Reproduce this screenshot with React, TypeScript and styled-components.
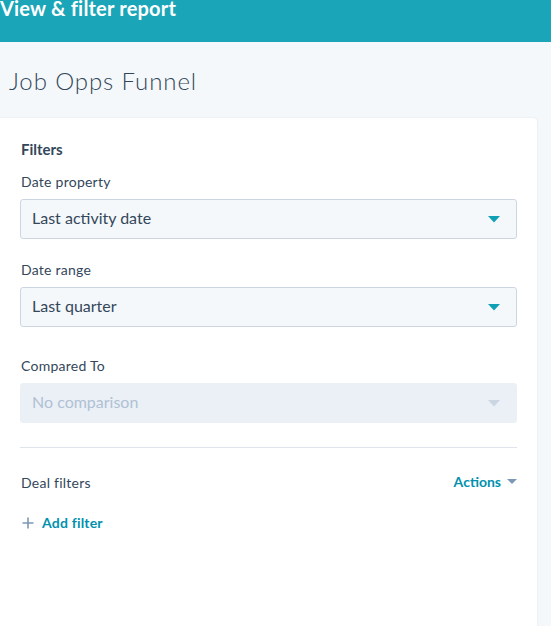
import styled, { createGlobalStyle } from 'styled-components';

const GlobalStyle = createGlobalStyle`
  html, body {
    margin: 0;
    padding: 0;
    background: #f5f8fa;
    font-family: Lato, "Open Sans", sans-serif;
    color: #33475b;
    overflow: hidden;
  }
`;

/** 日付系フィルタの定義 */
type SelectField = {
  label: string;
  value: string;
  disabled?: boolean;
  gap: number;
};

const fields: SelectField[] = [
  { label: 'Date property', value: 'Last activity date', gap: 13 },
  { label: 'Date range', value: 'Last quarter', gap: 21 },
  { label: 'Compared To', value: 'No comparison', disabled: true, gap: 29 },
];

/** ドロップダウンの三角 */
const Caret = ({ color }: { color: string }) => (
  <svg width="12" height="7" viewBox="0 0 12 7">
    <path d="M0 0 L12 0 L6 6.5 Z" fill={color} />
  </svg>
);

export default function App() {
  return (
    <>
      <GlobalStyle />
      <Page>
        <Header>
          <HeaderTitle>View &amp; filter report</HeaderTitle>
        </Header>
        <ReportTitle>Job Opps Funnel</ReportTitle>
        <Card>
          <SectionTitle>Filters</SectionTitle>
          {fields.map((f) => (
            <Field key={f.label} $gap={f.gap}>
              <Label>{f.label}</Label>
              <Select $disabled={f.disabled}>
                <SelectValue>{f.value}</SelectValue>
                <Caret color={f.disabled ? '#cbd6e2' : '#0fa0b5'} />
              </Select>
            </Field>
          ))}
          <Divider />
          <DealRow>
            <Label>Deal filters</Label>
            <Actions>
              Actions
              <svg width="10" height="6" viewBox="0 0 10 6">
                <path d="M0 0 L10 0 L5 5 Z" fill="#7c98b6" />
              </svg>
            </Actions>
          </DealRow>
          <AddFilter>
            <svg width="12" height="12" viewBox="0 0 12 12">
              <path d="M6 0.5 V11.5 M0.5 6 H11.5" stroke="#7c98b6" strokeWidth="1.6" />
            </svg>
            Add filter
          </AddFilter>
        </Card>
      </Page>
    </>
  );
}

const Page = styled.div`
  display: flex;
  flex-direction: column;
  height: 626px;
`;

const Header = styled.div`
  height: 42px;
  background: #1aa6b8;
  overflow: hidden;
  flex-shrink: 0;
`;

const HeaderTitle = styled.h1`
  margin: -4px 0 0 0;
  font-size: 20px;
  line-height: 24px;
  font-weight: 700;
  color: #ffffff;
  letter-spacing: 0.2px;
`;

const ReportTitle = styled.h2`
  margin: 24px 0 0 9px;
  font-size: 24px;
  line-height: 30px;
  font-weight: 300;
  color: #33475b;
  letter-spacing: 0.9px;
`;

const Card = styled.div`
  margin-top: 22px;
  width: 537px;
  flex: 1;
  background: #ffffff;
  border-top-right-radius: 4px;
  box-shadow: 0 0 2px rgba(45, 62, 80, 0.12);
  padding: 21px 20px 0 20px;
  box-sizing: border-box;
`;

const SectionTitle = styled.div`
  font-size: 15px;
  line-height: 20px;
  font-weight: 700;
  padding-left: 1px;
`;

const Field = styled.div<{ $gap: number }>`
  margin-top: ${(p) => p.$gap}px;
`;

const Label = styled.div`
  font-size: 14px;
  line-height: 20px;
  padding-left: 1px;
  letter-spacing: 0.25px;
  color: #33475b;
`;

const Select = styled.div<{ $disabled?: boolean }>`
  margin-top: 7px;
  height: 40px;
  box-sizing: border-box;
  display: flex;
  align-items: center;
  justify-content: space-between;
  padding: 0 16px 0 11px;
  border-radius: 3px;
  border: 1px solid ${(p) => (p.$disabled ? '#eaf0f6' : '#cbd6e2')};
  background: ${(p) => (p.$disabled ? '#eaf0f6' : '#f5f8fa')};
  color: ${(p) => (p.$disabled ? '#b0c1d4' : '#33475b')};
  font-size: 16px;
`;

const SelectValue = styled.span`
  margin-top: -3px;
`;

const Divider = styled.hr`
  margin: 24px 0 0 0;
  border: none;
  border-top: 1px solid #dfe3eb;
`;

const DealRow = styled.div`
  margin-top: 25px;
  display: flex;
  justify-content: space-between;
  align-items: center;
`;

const Actions = styled.div`
  display: flex;
  align-items: center;
  gap: 6px;
  font-size: 14px;
  font-weight: 700;
  color: #0091ae;
  margin-top: -3px;
`;

const AddFilter = styled.div`
  margin-top: 21px;
  display: flex;
  align-items: center;
  gap: 8px;
  padding-left: 2px;
  font-size: 14px;
  font-weight: 700;
  letter-spacing: 0.2px;
  color: #0091ae;
`;
